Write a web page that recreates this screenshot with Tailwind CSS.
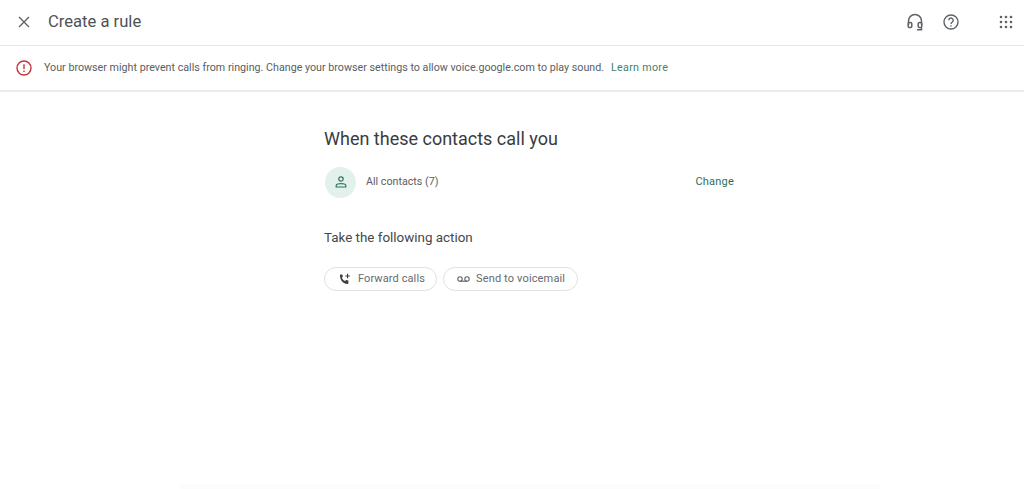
<!DOCTYPE html>
<html lang="en">

<head>
    <meta charset="UTF-8">
    <meta name="viewport" content="width=device-width, initial-scale=1.0">
    <title>Create a rule</title>
    <script src="https://cdn.jsdelivr.net/npm/@tailwindcss/browser@4"></script>
</head>

<body class="bg-white font-['Roboto',sans-serif] overflow-hidden">
    <div class="h-[489px] w-[1024px] flex flex-col relative overflow-hidden">
        <!-- top bar -->
        <header class="h-[46px] shrink-0 flex items-center border-b border-[#e6e6e6] pl-[16px] pr-[11px]">
            <svg class="w-[16px] h-[16px] mb-[1px] text-[#5f6368]" viewBox="0 0 16 16" fill="none" stroke="currentColor" stroke-width="1.4">
                <path d="M3 3l10 10M13 3L3 13" />
            </svg>
            <h1 class="ml-[16px] text-[16.6px] text-[#4f5255] font-normal">Create a rule</h1>
            <div class="ml-auto flex items-center mb-[1px]">
                <svg class="w-[18px] h-[20px] text-[#5f6368]" viewBox="0 0 18 20" fill="none" stroke="currentColor" stroke-width="1.5">
                    <path d="M2.500 13V9a6.500 6.500 0 0 1 13 0v4" />
                    <rect x="2.200" y="10.500" width="3.600" height="5" rx="1.200" />
                    <rect x="12.200" y="10.500" width="3.600" height="5" rx="1.200" />
                    <path d="M15.500 15.500v2.200h-4.500" />
                </svg>
                <svg class="ml-[18px] w-[18px] h-[18px] text-[#5f6368]" viewBox="0 0 18 18" fill="none" stroke="currentColor" stroke-width="1.4">
                    <circle cx="9" cy="9" r="7" />
                    <path d="M6.800 7.200a2.200 2.200 0 1 1 3.500 1.800c-.8.600-1.300 1-1.300 2" />
                    <path d="M9 12.300v1.300" />
                </svg>
                <svg class="ml-[39px] w-[14px] h-[14px] text-[#5f6368]" viewBox="0 0 14 14" fill="currentColor">
                    <circle cx="2" cy="2" r="1.300" /><circle cx="7" cy="2" r="1.300" /><circle cx="12" cy="2" r="1.300" />
                    <circle cx="2" cy="7" r="1.300" /><circle cx="7" cy="7" r="1.300" /><circle cx="12" cy="7" r="1.300" />
                    <circle cx="2" cy="12" r="1.300" /><circle cx="7" cy="12" r="1.300" /><circle cx="12" cy="12" r="1.300" />
                </svg>
            </div>
        </header>

        <!-- warning banner -->
        <div class="h-[46px] shrink-0 flex items-center border-b-2 border-[#ebebeb] pl-[16px] text-[10.7px] text-[#5a5d61]">
            <svg class="w-[16px] h-[16px] text-[#c5323a]" viewBox="0 0 16 16" fill="none" stroke="currentColor" stroke-width="1.4">
                <circle cx="8" cy="8" r="7" />
                <path d="M8 4.200v4.800M8 10.600v1.400" />
            </svg>
            <span class="ml-[12px] tracking-[0.01px]">Your browser might prevent calls from ringing. Change your browser settings to allow voice.google.com to play sound.</span>
            <a class="ml-[7px] tracking-[0.3px] text-[#3f8268]">Learn more</a>
        </div>

        <!-- rule form -->
        <main class="ml-[324px] w-[410px] pt-[36px]">
            <h2 class="text-[18px] leading-[22px] text-[#3a3b3e] font-normal">When these contacts call you</h2>

            <div class="mt-[16px] flex items-center h-[32px]">
                <div class="ml-[1px] w-[31px] h-[31px] rounded-full bg-[#e3f1ed] flex items-center justify-center">
                    <svg class="w-[12px] h-[12px] text-[#35735f]" viewBox="0 0 12 12" fill="none" stroke="currentColor" stroke-width="1.2">
                        <circle cx="6" cy="3" r="2.200" />
                        <path d="M1.200 11V9.600c0-1.200 2.400-2 4.800-2s4.800.8 4.800 2V11z" />
                    </svg>
                </div>
                <span class="ml-[10px] text-[10.7px] text-[#5a5d61]">All contacts (7)</span>
                <a class="ml-auto mt-[1px] text-[11px] tracking-[0.2px] text-[#2f6f5a]">Change</a>
            </div>

            <h3 class="mt-[32px] text-[13.4px] leading-[16px] text-[#44474a] font-normal">Take the following action</h3>

            <div class="mt-[21px] flex gap-[6px]">
                <button class="h-[24px] w-[113px] rounded-full border border-[#dfe1e5] flex items-center pl-[14px] text-[11px] text-[#666a6e]">
                    <svg class="w-[12px] h-[12px] text-[#3c4043]" viewBox="0 0 12 12" fill="currentColor">
                        <path d="M1 1.600h2.300l.6 2.200-1.100 1c.6 1.400 1.900 2.700 3.300 3.300l1-1.100 2.300.6V10c0 .6-.5 1-1 1C4.200 11 1 7.300 1 2.600c0-.5 0-1 0-1z" />
                        <path d="M8 .8h1.100v1.700h1.700v1.100H9.100v1.700H8V3.600H6.300V2.500H8z" />
                    </svg>
                    <span class="ml-[7px] tracking-[0.1px]">Forward calls</span>
                </button>
                <button class="h-[24px] w-[135px] rounded-full border border-[#dfe1e5] flex items-center pl-[13px] text-[11px] text-[#666a6e]">
                    <svg class="w-[13px] h-[8px] text-[#5f6368]" viewBox="0 0 13 8" fill="none" stroke="currentColor" stroke-width="1.100">
                        <circle cx="3" cy="4" r="2.200" />
                        <circle cx="10" cy="4" r="2.200" />
                        <path d="M3 6.200h7" />
                    </svg>
                    <span class="ml-[6px] tracking-[0.15px]">Send to voicemail</span>
                </button>
            </div>
        </main>

        <!-- faint shadow along the bottom edge -->
        <div class="absolute left-[180px] bottom-0 w-[700px] h-[5px] bg-[#fcfcfc]"></div>
    </div>
</body>

</html>
